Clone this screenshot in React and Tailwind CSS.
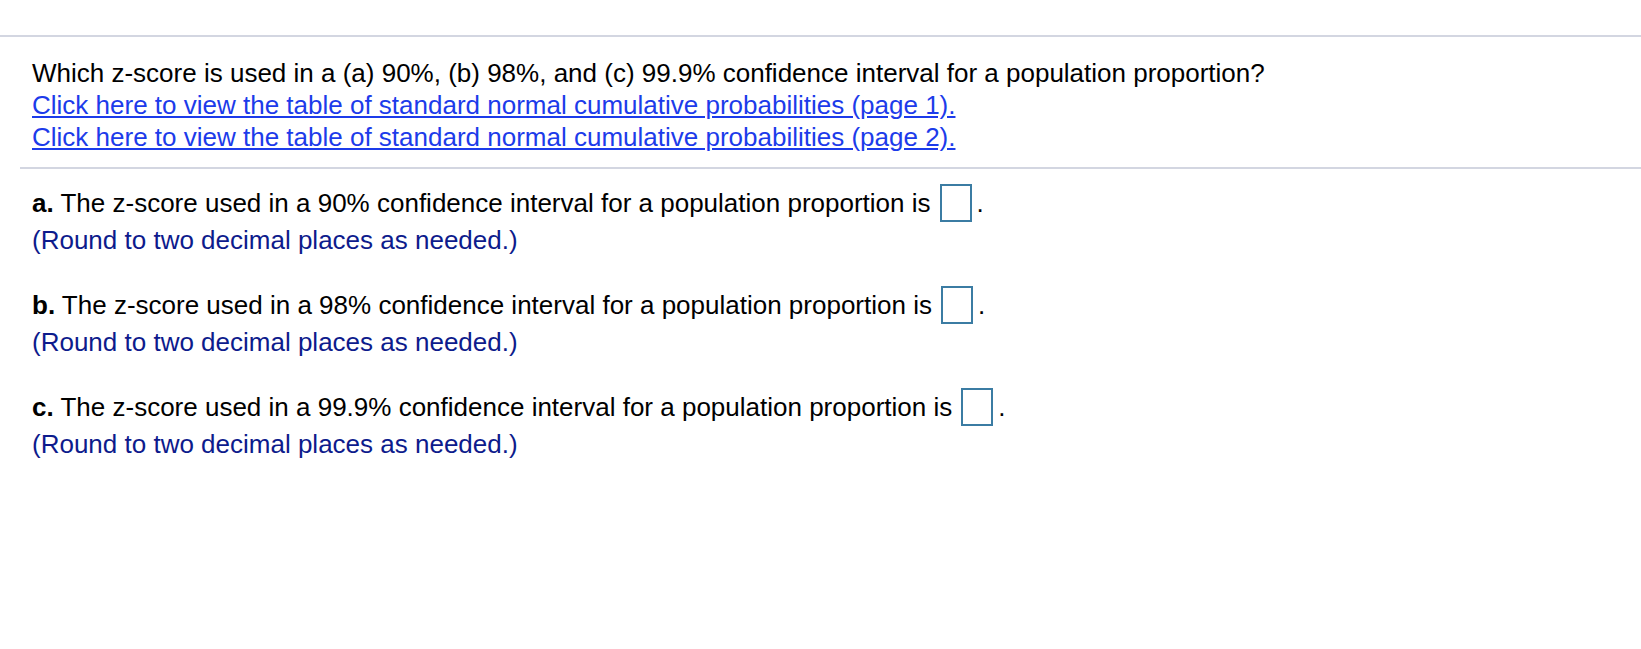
import React from "react";

const parts = [
  { label: "a.", pct: "90%" },
  { label: "b.", pct: "98%" },
  { label: "c.", pct: "99.9%" },
];

const AnswerBox = () => (
  <span className="inline-block w-[32px] h-[38px] border-2 border-[#3b7ca3] ml-[9px] mr-[5px]" />
);

export default function App() {
  return (
    <div className="min-h-screen w-full bg-white text-black text-[26px] leading-[32px] font-['Liberation_Sans',Arial,sans-serif]">
      <div className="pt-[35px]">
        <div className="border-t-2 border-[#d3d6e1]" />
        <div className="pl-[32px] pt-[20px]">
          <p>
            Which z-score is used in a (a) 90%, (b) 98%, and (c) 99.9% confidence interval for a
            population proportion?
          </p>
          <a href="#" className="block text-[#1c3bea] underline">
            Click here to view the table of standard normal cumulative probabilities (page 1).
          </a>
          <a href="#" className="block text-[#1c3bea] underline">
            Click here to view the table of standard normal cumulative probabilities (page 2).
          </a>
        </div>
        <div className="ml-[20px] mt-[14px] border-t-2 border-[#d3d6e1]" />
        <div className="pl-[32px] pt-[15px] flex flex-col gap-[30px]">
          {parts.map((part) => (
            <div key={part.label} className="flex flex-col gap-[2px]">
              <div className="flex items-center h-[38px]">
                <span>
                  <b>{part.label}</b> The z-score used in a {part.pct} confidence interval for a
                  population proportion is
                </span>
                <AnswerBox />
                <span>.</span>
              </div>
              <p className="text-[#0d1b8c]">(Round to two decimal places as needed.)</p>
            </div>
          ))}
        </div>
      </div>
    </div>
  );
}
